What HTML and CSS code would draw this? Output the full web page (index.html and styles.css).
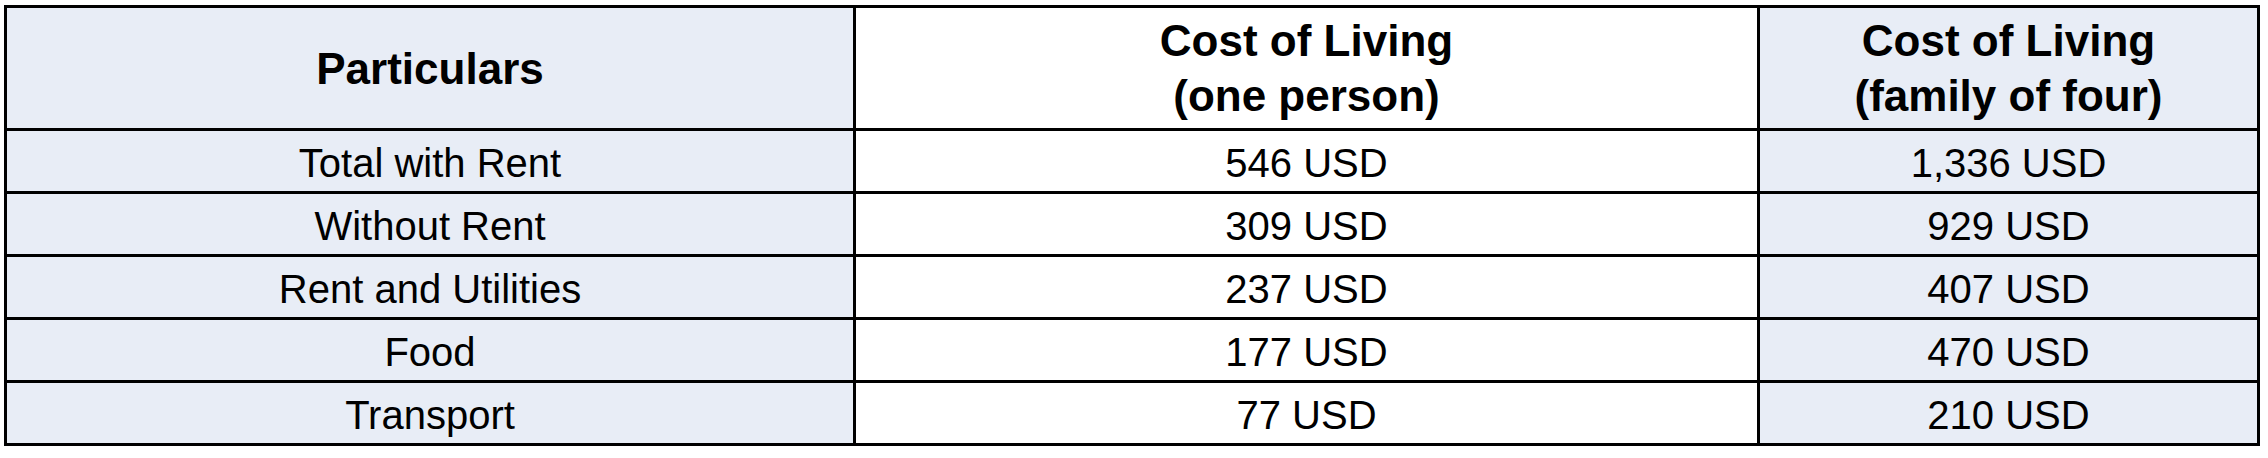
FILE: index.html
```html
<!DOCTYPE html>
<html lang="en">
<head>
<meta charset="utf-8">
<title>Cost of Living</title>
<link rel="stylesheet" href="styles.css">
</head>
<body>
<div class="table">
  <div class="cell head tint">Particulars</div>
  <div class="cell head">Cost of Living<br>(one person)</div>
  <div class="cell head tint">Cost of Living<br>(family of four)</div>

  <div class="cell tint">Total with Rent</div>
  <div class="cell">546 USD</div>
  <div class="cell tint">1,336 USD</div>

  <div class="cell tint">Without Rent</div>
  <div class="cell">309 USD</div>
  <div class="cell tint">929 USD</div>

  <div class="cell tint">Rent and Utilities</div>
  <div class="cell">237 USD</div>
  <div class="cell tint">407 USD</div>

  <div class="cell tint">Food</div>
  <div class="cell">177 USD</div>
  <div class="cell tint">470 USD</div>

  <div class="cell tint">Transport</div>
  <div class="cell">77 USD</div>
  <div class="cell tint">210 USD</div>
</div>
</body>
</html>
```

FILE: styles.css
```css
html, body {
  margin: 0;
  padding: 0;
  background: #ffffff;
}

body {
  padding: 5px 0 0 4px;
  font-family: "Liberation Sans", Arial, Helvetica, sans-serif;
  color: #000000;
}

.table {
  display: grid;
  grid-template-columns: 846px 901px 497px;
  grid-template-rows: 120px repeat(5, 60px);
  gap: 3px;
  padding: 3px;
  background: #000000;
  width: max-content;
}

.cell {
  display: flex;
  align-items: center;
  justify-content: center;
  text-align: center;
  background: #ffffff;
  font-size: 40px;
  line-height: 46px;
  padding-top: 4px;
  box-sizing: border-box;
}

.cell.tint {
  background: #e8edf6;
}

.cell.head {
  font-weight: bold;
  font-size: 44px;
  line-height: 55px;
  padding-top: 0;
}
```
